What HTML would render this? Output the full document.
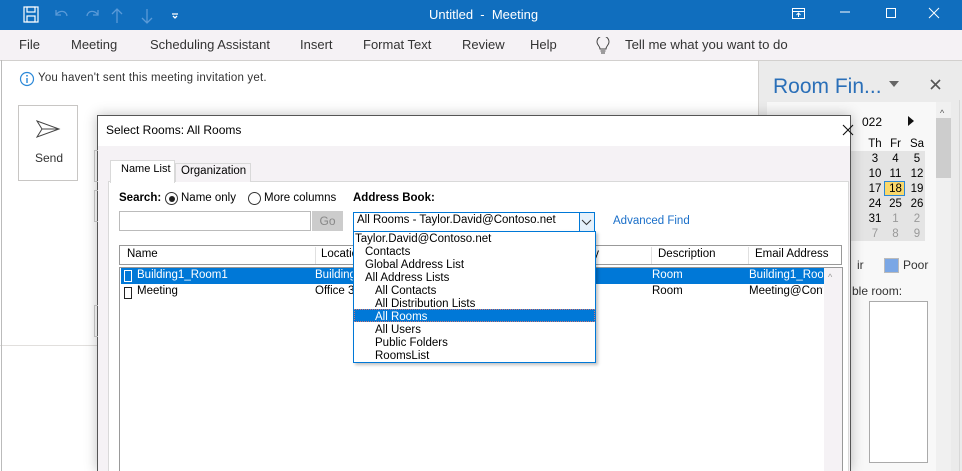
<!DOCTYPE html>
<html><head><meta charset="utf-8"><style>
*{box-sizing:border-box;margin:0;padding:0}
html,body{width:962px;height:471px;overflow:hidden}
body{position:relative;background:#fff;font-family:"Segoe UI","Liberation Sans",sans-serif;font-size:12px;color:#000}
.a{position:absolute;white-space:nowrap}
</style></head><body>
<div class="a" style="left:0;top:0;width:962px;height:30px;background:#106ebe"></div>
<svg class="a" style="left:22px;top:5px" width="20" height="20" viewBox="0 0 20 20" fill="none" stroke="#fff" stroke-width="1.2"><rect x="2" y="2" width="14" height="15"/><rect x="5" y="2" width="8" height="5"/><rect x="5" y="11" width="8" height="6"/></svg>
<svg class="a" style="left:52px;top:5px" width="140" height="20" viewBox="0 0 140 20" fill="none" stroke="#5a9ad8" stroke-width="1.3"><path d="M4 5v5h5M4 10c3-5 10-5 11 1"/><path d="M46 5v5h-5M46 10c-3-5-10-5-11 1"/><path d="M65 4v14M60 9l5-5 5 5"/><path d="M95 4v14M90 13l5 5 5-5"/><path d="M120 9h6M121 11l2 2 2-2" stroke="#fff"/></svg>
<div class="a" style="left:429px;top:7px;color:#fff;font-size:13px">Untitled&nbsp; - &nbsp;Meeting</div>
<svg class="a" style="left:790px;top:5px" width="170" height="20" viewBox="0 0 170 20" fill="none" stroke="#fff" stroke-width="1"><rect x="2.5" y="3.5" width="12" height="10"/><path d="M2.5 6.5h12M8.5 12V8M6.5 10l2-2 2 2"/><path d="M50 7h10"/><rect x="96.5" y="3.5" width="9" height="9"/><path d="M139 3l10 10M149 3l-10 10"/></svg>
<div class="a" style="left:0;top:30px;width:962px;height:31px;background:#f5f2f5;border-bottom:1px solid #d2d0ce"></div>
<div class="a" style="left:19px;top:37px;font-size:13px;color:#333">File</div>
<div class="a" style="left:71px;top:37px;font-size:13px;color:#333">Meeting</div>
<div class="a" style="left:150px;top:37px;font-size:13px;color:#333">Scheduling Assistant</div>
<div class="a" style="left:300px;top:37px;font-size:13px;color:#333">Insert</div>
<div class="a" style="left:363px;top:37px;font-size:13px;color:#333">Format Text</div>
<div class="a" style="left:462px;top:37px;font-size:13px;color:#333">Review</div>
<div class="a" style="left:530px;top:37px;font-size:13px;color:#333">Help</div>
<svg class="a" style="left:596px;top:37px" width="14" height="18" viewBox="0 0 14 18" fill="none" stroke="#444" stroke-width="1"><path d="M4 12c0-3-3-4-3-7a6 6 0 0 1 12 0c0 3-3 4-3 7zM4.5 14h5M5 16h4"/></svg>
<div class="a" style="left:625px;top:37px;font-size:13.2px;color:#333">Tell me what you want to do</div>
<svg class="a" style="left:19px;top:71px" width="16" height="16" viewBox="0 0 16 16"><circle cx="8" cy="8" r="6.5" fill="none" stroke="#2b88d8" stroke-width="1.2"/><path d="M8 7v5" stroke="#2b88d8" stroke-width="1.4"/><circle cx="8" cy="4.8" r="0.9" fill="#2b88d8"/></svg>
<div class="a" style="left:38px;top:72px;font-size:11.5px;color:#333;letter-spacing:0.2px">You haven't sent this meeting invitation yet.</div>
<div class="a" style="left:18px;top:105px;width:60px;height:76px;border:1px solid #c8c6c4;background:#fff"></div>
<svg class="a" style="left:36px;top:120px" width="26" height="18" viewBox="0 0 26 18" fill="none" stroke="#444" stroke-width="1"><path d="M1 1l22 8-22 8 5-8zM6 9h17"/></svg>
<div class="a" style="left:35px;top:151px;font-size:12px;color:#333">Send</div>
<div class="a" style="left:0;top:345px;width:98px;height:1px;background:#e1dfdd"></div>
<div class="a" style="left:1px;top:60px;width:1px;height:411px;background:#bbb"></div>
<div class="a" style="left:758px;top:61px;width:204px;height:410px;background:#ebebeb;border-left:1px solid #d2d0ce"></div>
<div class="a" style="left:773px;top:75px;font-size:21px;color:#2a6fb8">Room Fin...</div>
<div class="a" style="left:889px;top:81px;width:0;height:0;border-left:5px solid transparent;border-right:5px solid transparent;border-top:6px solid #666"></div>
<svg class="a" style="left:930px;top:79px" width="11" height="11" viewBox="0 0 11 11" stroke="#555" stroke-width="1.6"><path d="M1 1l9 9M10 1l-9 9"/></svg>
<div class="a" style="left:767px;top:102px;width:170px;height:369px;background:#f8f8f8"></div>
<div class="a" style="left:936px;top:102px;width:15px;height:369px;background:#f0f0f0"></div>
<div class="a" style="left:936px;top:118px;width:15px;height:60px;background:#cdcdcd"></div>
<div class="a" style="left:940px;top:108px;font-size:9px;color:#555">^</div>
<div class="a" style="left:862px;top:115px;font-size:12px">022</div>
<div class="a" style="left:908px;top:116px;width:0;height:0;border-top:5px solid transparent;border-bottom:5px solid transparent;border-left:6px solid #111"></div>
<div class="a" style="left:850px;top:151px;width:75px;height:90px;background:#e4e4e4"></div>
<div class="a" style="left:884px;top:181px;width:21px;height:15px;background:#f9d86b;border:1px solid #2b88d8"></div>
<div class="a" style="left:865px;top:137px;font-size:11.5px;line-height:15px;text-align:center">
<div style="display:flex"><span style="width:20px">Th</span><span style="width:21px">Fr</span><span style="width:22px">Sa</span></div>
<div style="display:flex"><span style="width:20px">3</span><span style="width:21px">4</span><span style="width:22px">5</span></div>
<div style="display:flex"><span style="width:20px">10</span><span style="width:21px">11</span><span style="width:22px">12</span></div>
<div style="display:flex"><span style="width:20px">17</span><span style="width:21px">18</span><span style="width:22px">19</span></div>
<div style="display:flex"><span style="width:20px">24</span><span style="width:21px">25</span><span style="width:22px">26</span></div>
<div style="display:flex"><span style="width:20px">31</span><span style="width:21px;color:#999">1</span><span style="width:22px;color:#999">2</span></div>
<div style="display:flex;color:#999"><span style="width:20px">7</span><span style="width:21px">8</span><span style="width:22px">9</span></div>
</div>
<div class="a" style="left:857px;top:258px;font-size:12px;color:#333">ir</div>
<div class="a" style="left:884px;top:258px;width:15px;height:15px;background:#7ba7e5;border:1px solid #bbb"></div>
<div class="a" style="left:903px;top:258px;font-size:12px;color:#333">Poor</div>
<div class="a" style="left:852px;top:284px;font-size:12px;color:#333">ble room:</div>
<div class="a" style="left:869px;top:301px;width:59px;height:162px;background:#fff;border:1px solid #aaa"></div>
<div class="a" style="left:959px;top:100px;width:1px;height:371px;background:#d8d8d8"></div>
<div class="a" style="left:97px;top:115px;width:754px;height:356px;background:#f5f2f5;border:1px solid #555;border-bottom:0;box-shadow:0 0 12px rgba(0,0,0,.25)"></div>
<div class="a" style="left:98px;top:116px;width:752px;height:30px;background:#fff"></div>
<div class="a" style="left:106px;top:123px;font-size:12px">Select Rooms: All Rooms</div>
<svg class="a" style="left:842px;top:124px" width="12" height="12" viewBox="0 0 12 12" stroke="#111" stroke-width="1.1"><path d="M1 1l10 10M11 1l-10 10"/></svg>
<div class="a" style="left:94px;top:150px;width:4px;height:32px;border:1px solid #bbb;border-right:0"></div>
<div class="a" style="left:94px;top:190px;width:4px;height:32px;border:1px solid #bbb;border-right:0"></div>
<div class="a" style="left:94px;top:305px;width:4px;height:32px;border:1px solid #bbb;border-right:0"></div>
<div class="a" style="left:108px;top:181px;width:741px;height:290px;background:#fff;border:1px solid #d9d9d9;border-bottom:0"></div>
<div class="a" style="left:175px;top:163px;width:76px;height:19px;background:#f5f2f5;border:1px solid #d9d9d9;border-bottom:0"></div>
<div class="a" style="left:181px;top:165px;font-size:11.5px">Organization</div>
<div class="a" style="left:110px;top:160px;width:65px;height:23px;background:#fff;border:1px solid #d9d9d9;border-bottom:0"></div>
<div class="a" style="left:121px;top:163px;font-size:11px">Name List</div>
<div class="a" style="left:119px;top:192px;font-size:11.5px;font-weight:bold">Search:</div>
<div class="a" style="left:165px;top:192px;width:13px;height:13px;border:1px solid #333;border-radius:50%"></div>
<div class="a" style="left:168.5px;top:195.5px;width:6px;height:6px;background:#222;border-radius:50%"></div>
<div class="a" style="left:181px;top:192px;font-size:11.5px">Name only</div>
<div class="a" style="left:248px;top:192px;width:13px;height:13px;border:1px solid #333;border-radius:50%"></div>
<div class="a" style="left:264px;top:192px;font-size:11.5px">More columns</div>
<div class="a" style="left:353px;top:192px;font-size:11.5px;font-weight:bold">Address Book:</div>
<div class="a" style="left:119px;top:211px;width:192px;height:20px;border:1px solid #bbb;background:#fff"></div>
<div class="a" style="left:312px;top:211px;width:31px;height:20px;border:1px solid #ccc;background:#ccc;color:#888;text-align:center;line-height:18px">Go</div>
<div class="a" style="left:353px;top:212px;width:242px;height:20px;border:1px solid #0078d7;background:#fff"></div>
<div class="a" style="left:357px;top:214px;font-size:11.5px">All Rooms - Taylor.David@Contoso.net</div>
<div class="a" style="left:579px;top:213px;width:15px;height:18px;background:#e5f1fb;border-left:1px solid #0078d7"></div>
<svg class="a" style="left:581px;top:219px" width="11" height="7" viewBox="0 0 11 7" fill="none" stroke="#333"><path d="M1 1l4.5 4.5L10 1"/></svg>
<div class="a" style="left:613px;top:215px;font-size:11.5px;color:#1a6fc9">Advanced Find</div>
<div class="a" style="left:119px;top:245px;width:723px;height:20px;border:1px solid #999;background:#fff"></div>
<div class="a" style="left:127px;top:248px;font-size:11.5px">Name</div>
<div class="a" style="left:315px;top:247px;width:1px;height:17px;background:#e0e0e0"></div>
<div class="a" style="left:321px;top:248px;font-size:11.5px">Location</div>
<div class="a" style="left:590px;top:248px;font-size:11.5px">ty</div>
<div class="a" style="left:651px;top:247px;width:1px;height:17px;background:#e0e0e0"></div>
<div class="a" style="left:658px;top:248px;font-size:11.5px">Description</div>
<div class="a" style="left:748px;top:247px;width:1px;height:17px;background:#e0e0e0"></div>
<div class="a" style="left:755px;top:248px;font-size:11.5px">Email Address</div>
<div class="a" style="left:119px;top:267px;width:724px;height:204px;border:1px solid #999;border-bottom:0;background:#fff"></div>
<div class="a" style="left:824px;top:268px;width:18px;height:203px;background:#f5f2f5"></div>
<div class="a" style="left:828px;top:272px;font-size:9px;color:#999">^</div>
<div class="a" style="left:121px;top:268px;width:703px;height:16px;background:#0078d7"></div>
<div class="a" style="left:124px;top:270px;width:8px;height:12px;border:1px solid #fff"></div>
<div class="a" style="left:137px;top:269px;font-size:11.5px;color:#fff">Building1_Room1</div>
<div class="a" style="left:315px;top:269px;font-size:11.5px;color:#fff">Building</div>
<div class="a" style="left:652px;top:269px;font-size:11.5px;color:#fff">Room</div>
<div class="a" style="left:749px;top:269px;font-size:11.5px;color:#fff;width:74px;overflow:hidden">Building1_Room1</div>
<div class="a" style="left:124px;top:287px;width:8px;height:12px;border:1px solid #222"></div>
<div class="a" style="left:137px;top:285px;font-size:11.5px">Meeting</div>
<div class="a" style="left:315px;top:285px;font-size:11.5px">Office 3</div>
<div class="a" style="left:652px;top:285px;font-size:11.5px">Room</div>
<div class="a" style="left:749px;top:285px;font-size:11.5px;width:74px;overflow:hidden">Meeting@Contoso</div>
<div class="a" style="left:353px;top:231px;width:243px;height:132px;background:#fff;border:1px solid #0078d7;box-shadow:2px 2px 3px rgba(0,0,0,.25);font-size:11.5px;line-height:13px">
<div style="position:absolute;left:0;top:77px;width:241px;height:13px;background:#0078d7;border:1px dotted #c77"></div>
<div style="position:absolute;left:1px;top:1px">Taylor.David@Contoso.net</div>
<div style="position:absolute;left:11px;top:14px">Contacts</div>
<div style="position:absolute;left:11px;top:27px">Global Address List</div>
<div style="position:absolute;left:11px;top:40px">All Address Lists</div>
<div style="position:absolute;left:21px;top:53px">All Contacts</div>
<div style="position:absolute;left:21px;top:66px">All Distribution Lists</div>
<div style="position:absolute;left:21px;top:79px;color:#fff">All Rooms</div>
<div style="position:absolute;left:21px;top:92px">All Users</div>
<div style="position:absolute;left:21px;top:105px">Public Folders</div>
<div style="position:absolute;left:21px;top:118px">RoomsList</div>
</div>
</body></html>
